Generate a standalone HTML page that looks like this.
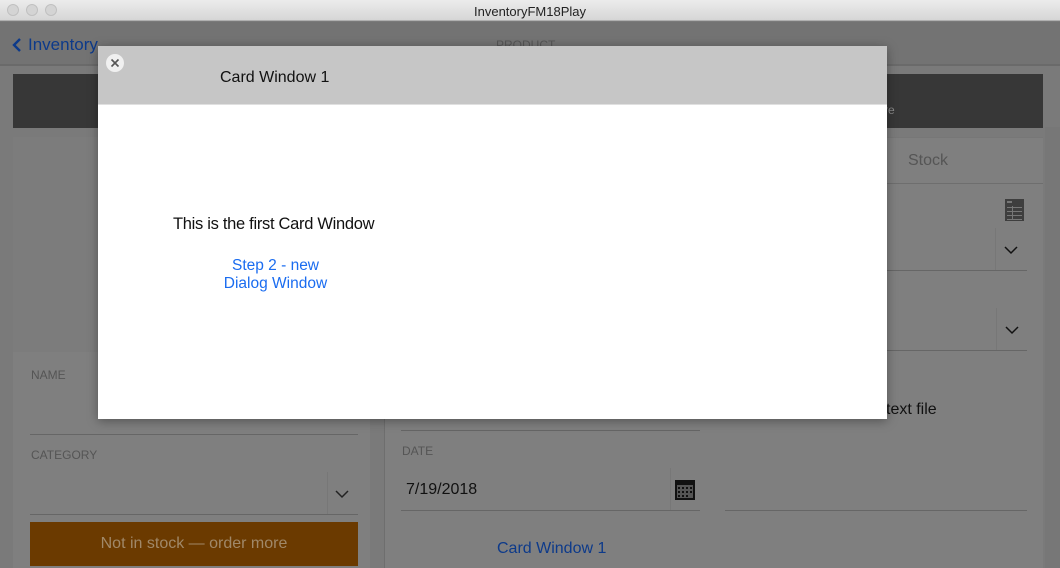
<!DOCTYPE html>
<html><head><meta charset="utf-8"><style>
*{margin:0;padding:0;box-sizing:border-box}
body{width:1060px;height:568px;overflow:hidden;position:relative;background:#7a7a7a;font-family:"Liberation Sans",sans-serif}
.a{position:absolute}
</style></head><body>
<div class="a" style="left:0;top:0;width:1060px;height:21px;background:linear-gradient(#ececec,#d6d6d6);border-bottom:1px solid #b0b0b0"></div>
<div class="a" style="left:7px;top:4px;width:12px;height:12px;border-radius:50%;background:#d4d4d4;border:1px solid #c0c0c0"></div>
<div class="a" style="left:26px;top:4px;width:12px;height:12px;border-radius:50%;background:#d4d4d4;border:1px solid #c0c0c0"></div>
<div class="a" style="left:45px;top:4px;width:12px;height:12px;border-radius:50%;background:#d4d4d4;border:1px solid #c0c0c0"></div>
<div class="a" style="left:0;top:4px;width:1060px;text-align:center;font-size:13px;color:#222">InventoryFM18Play</div>
<div class="a" style="left:0;top:22px;width:1060px;height:44px;background:#737373;border-bottom:2px solid #6a6a6a"></div>
<svg class="a" style="left:12px;top:38px" width="10" height="14"><path d="M8 1 L2 7 L8 13" stroke="#0d3a8a" stroke-width="2.4" fill="none"/></svg>
<div class="a" style="left:28px;top:35px;font-size:17px;color:#0d3a8a">Inventory</div>
<div class="a" style="left:496px;top:38px;font-size:12px;color:#555">PRODUCT</div>
<div class="a" style="left:13px;top:74px;width:1030px;height:54px;background:#373737"></div>
<div class="a" style="left:884px;top:103px;font-size:12px;color:#888">re</div>
<div class="a" style="left:13px;top:137px;width:357px;height:431px;background:#7f7f7f"></div>
<div class="a" style="left:13px;top:137px;width:357px;height:215px;background:#7c7c7c"></div>
<div class="a" style="left:31px;top:368px;font-size:12px;color:#555">NAME</div>
<div class="a" style="left:30px;top:434px;width:328px;height:1px;background:#666"></div>
<div class="a" style="left:31px;top:448px;font-size:12px;color:#555">CATEGORY</div>
<div class="a" style="left:327px;top:472px;width:1px;height:42px;background:#777"></div>
<svg class="a" style="left:335px;top:490px" width="14" height="9"><path d="M1 1 L7 7 L13 1" stroke="#222" stroke-width="1.5" fill="none"/></svg>
<div class="a" style="left:30px;top:514px;width:328px;height:1px;background:#666"></div>
<div class="a" style="left:30px;top:522px;width:328px;height:44px;background:#6b3a00;color:#a08868;font-size:16px;text-align:center;line-height:44px">Not in stock — order more</div>
<div class="a" style="left:384px;top:137px;width:659px;height:431px;background:#7f7f7f;border-left:1px solid #6e6e6e;border-top:1px solid #777"></div>
<div class="a" style="left:385px;top:183px;width:658px;height:1px;background:#6e6e6e"></div>
<div class="a" style="left:908px;top:152px;font-size:16px;color:#555">Stock</div>
<div class="a" style="left:1045px;top:127px;width:15px;height:441px;background:#777"></div>
<svg class="a" style="left:1005px;top:199px" width="19" height="22"><rect x="0" y="0" width="19" height="22" fill="#3e3e3e"/><rect x="2" y="2" width="5" height="2" fill="#777"/><g stroke="#777" stroke-width="1"><path d="M2 8.5H17M2 12.5H17M2 16.5H17M2 20.5H17"/><path d="M7.5 7V21"/></g></svg>
<div class="a" style="left:995px;top:228px;width:1px;height:42px;background:#777"></div>
<svg class="a" style="left:1004px;top:246px" width="14" height="9"><path d="M1 1 L7 7 L13 1" stroke="#111" stroke-width="1.5" fill="none"/></svg>
<div class="a" style="left:700px;top:270px;width:327px;height:1px;background:#666"></div>
<div class="a" style="left:996px;top:308px;width:1px;height:42px;background:#777"></div>
<svg class="a" style="left:1005px;top:326px" width="14" height="9"><path d="M1 1 L7 7 L13 1" stroke="#111" stroke-width="1.5" fill="none"/></svg>
<div class="a" style="left:700px;top:350px;width:327px;height:1px;background:#666"></div>
<div class="a" style="left:886px;top:401px;font-size:16px;color:#111">text file</div>
<div class="a" style="left:401px;top:430px;width:299px;height:1px;background:#666"></div>
<div class="a" style="left:402px;top:444px;font-size:12px;color:#555">DATE</div>
<div class="a" style="left:406px;top:481px;font-size:16px;color:#111">7/19/2018</div>
<div class="a" style="left:670px;top:468px;width:1px;height:42px;background:#777"></div>
<svg class="a" style="left:675px;top:480px" width="20" height="20"><rect x="1" y="1" width="18" height="18" fill="#555" stroke="#111" stroke-width="2"/><rect x="1" y="1" width="18" height="4" fill="#111"/><g fill="#111"><rect x="3" y="7" width="2" height="2"/><rect x="7" y="7" width="2" height="2"/><rect x="11" y="7" width="2" height="2"/><rect x="15" y="7" width="2" height="2"/><rect x="3" y="11" width="2" height="2"/><rect x="7" y="11" width="2" height="2"/><rect x="11" y="11" width="2" height="2"/><rect x="15" y="11" width="2" height="2"/><rect x="3" y="15" width="2" height="2"/><rect x="7" y="15" width="2" height="2"/><rect x="11" y="15" width="2" height="2"/></g></svg>
<div class="a" style="left:401px;top:510px;width:299px;height:1px;background:#666"></div>
<div class="a" style="left:725px;top:510px;width:302px;height:1px;background:#666"></div>
<div class="a" style="left:497px;top:540px;font-size:16px;color:#0d3a8a">Card Window 1</div>
<div class="a" style="left:98px;top:46px;width:789px;height:373px;background:#fff;box-shadow:0 2px 10px rgba(0,0,0,.35)"></div>
<div class="a" style="left:98px;top:46px;width:789px;height:59px;background:#c6c6c6;border-bottom:1px solid #e0e0e0"></div>
<div class="a" style="left:106px;top:54px;width:18px;height:18px;border-radius:50%;background:#f0f0f0"></div>
<svg class="a" style="left:106px;top:54px" width="18" height="18"><path d="M5.5 5.5L12.5 12.5M12.5 5.5L5.5 12.5" stroke="#555" stroke-width="1.6"/></svg>
<div class="a" style="left:220px;top:69px;font-size:16px;color:#111">Card Window 1</div>
<div class="a" style="left:173px;top:215px;font-size:16.5px;color:#111;letter-spacing:-0.3px">This is the first Card Window</div>
<div class="a" style="left:198px;top:257px;width:155px;text-align:center;font-size:15.5px;line-height:18px;color:#1a6cf0">Step 2 - new<br>Dialog Window</div>
</body></html>
